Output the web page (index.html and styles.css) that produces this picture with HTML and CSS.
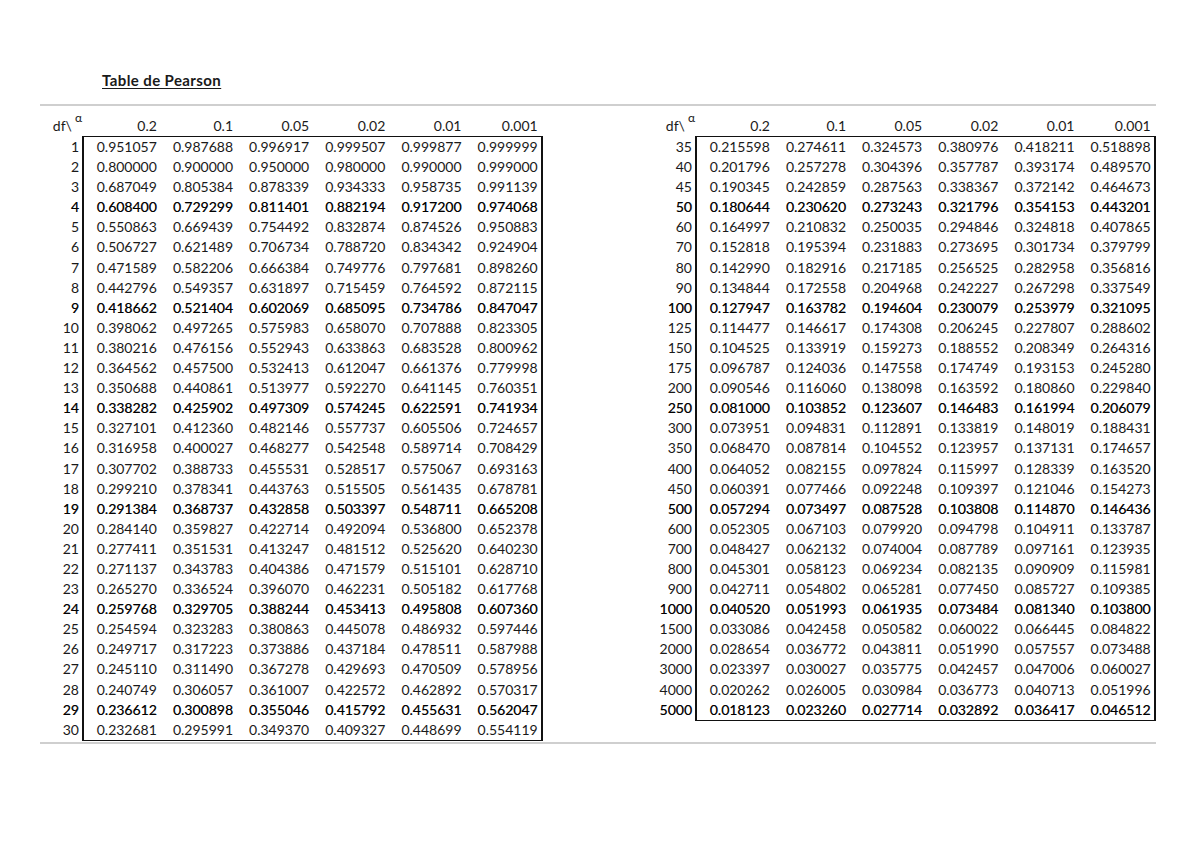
FILE: index.html
```html
<!DOCTYPE html>
<html lang="fr">
<head>
<meta charset="utf-8">
<title>Table de Pearson</title>
<link rel="stylesheet" href="styles.css">
</head>
<body>
<div class="page">
  <h1 class="title">Table de Pearson</h1>
  <div class="sheet">
    <div class="tbl tbl-l">
      <div class="hdr">
        <span class="lab">df\<sup class="alpha">α</sup></span>
        <span class="h">0.2</span><span class="h">0.1</span><span class="h">0.05</span><span class="h">0.02</span><span class="h">0.01</span><span class="h">0.001</span>
      </div>
      <div class="body">
        <div class="labels">
          <div>1</div><div>2</div><div>3</div><div>4</div><div>5</div><div>6</div><div>7</div><div>8</div><div>9</div><div>10</div>
          <div>11</div><div>12</div><div>13</div><div>14</div><div>15</div><div>16</div><div>17</div><div>18</div><div>19</div><div>20</div>
          <div>21</div><div>22</div><div>23</div><div>24</div><div>25</div><div>26</div><div>27</div><div>28</div><div>29</div><div>30</div>
        </div>
        <div class="box">
          <div class="row"><span>0.951057</span><span>0.987688</span><span>0.996917</span><span>0.999507</span><span>0.999877</span><span>0.999999</span></div>
          <div class="row"><span>0.800000</span><span>0.900000</span><span>0.950000</span><span>0.980000</span><span>0.990000</span><span>0.999000</span></div>
          <div class="row"><span>0.687049</span><span>0.805384</span><span>0.878339</span><span>0.934333</span><span>0.958735</span><span>0.991139</span></div>
          <div class="row"><span>0.608400</span><span>0.729299</span><span>0.811401</span><span>0.882194</span><span>0.917200</span><span>0.974068</span></div>
          <div class="row"><span>0.550863</span><span>0.669439</span><span>0.754492</span><span>0.832874</span><span>0.874526</span><span>0.950883</span></div>
          <div class="row"><span>0.506727</span><span>0.621489</span><span>0.706734</span><span>0.788720</span><span>0.834342</span><span>0.924904</span></div>
          <div class="row"><span>0.471589</span><span>0.582206</span><span>0.666384</span><span>0.749776</span><span>0.797681</span><span>0.898260</span></div>
          <div class="row"><span>0.442796</span><span>0.549357</span><span>0.631897</span><span>0.715459</span><span>0.764592</span><span>0.872115</span></div>
          <div class="row"><span>0.418662</span><span>0.521404</span><span>0.602069</span><span>0.685095</span><span>0.734786</span><span>0.847047</span></div>
          <div class="row"><span>0.398062</span><span>0.497265</span><span>0.575983</span><span>0.658070</span><span>0.707888</span><span>0.823305</span></div>
          <div class="row"><span>0.380216</span><span>0.476156</span><span>0.552943</span><span>0.633863</span><span>0.683528</span><span>0.800962</span></div>
          <div class="row"><span>0.364562</span><span>0.457500</span><span>0.532413</span><span>0.612047</span><span>0.661376</span><span>0.779998</span></div>
          <div class="row"><span>0.350688</span><span>0.440861</span><span>0.513977</span><span>0.592270</span><span>0.641145</span><span>0.760351</span></div>
          <div class="row"><span>0.338282</span><span>0.425902</span><span>0.497309</span><span>0.574245</span><span>0.622591</span><span>0.741934</span></div>
          <div class="row"><span>0.327101</span><span>0.412360</span><span>0.482146</span><span>0.557737</span><span>0.605506</span><span>0.724657</span></div>
          <div class="row"><span>0.316958</span><span>0.400027</span><span>0.468277</span><span>0.542548</span><span>0.589714</span><span>0.708429</span></div>
          <div class="row"><span>0.307702</span><span>0.388733</span><span>0.455531</span><span>0.528517</span><span>0.575067</span><span>0.693163</span></div>
          <div class="row"><span>0.299210</span><span>0.378341</span><span>0.443763</span><span>0.515505</span><span>0.561435</span><span>0.678781</span></div>
          <div class="row"><span>0.291384</span><span>0.368737</span><span>0.432858</span><span>0.503397</span><span>0.548711</span><span>0.665208</span></div>
          <div class="row"><span>0.284140</span><span>0.359827</span><span>0.422714</span><span>0.492094</span><span>0.536800</span><span>0.652378</span></div>
          <div class="row"><span>0.277411</span><span>0.351531</span><span>0.413247</span><span>0.481512</span><span>0.525620</span><span>0.640230</span></div>
          <div class="row"><span>0.271137</span><span>0.343783</span><span>0.404386</span><span>0.471579</span><span>0.515101</span><span>0.628710</span></div>
          <div class="row"><span>0.265270</span><span>0.336524</span><span>0.396070</span><span>0.462231</span><span>0.505182</span><span>0.617768</span></div>
          <div class="row"><span>0.259768</span><span>0.329705</span><span>0.388244</span><span>0.453413</span><span>0.495808</span><span>0.607360</span></div>
          <div class="row"><span>0.254594</span><span>0.323283</span><span>0.380863</span><span>0.445078</span><span>0.486932</span><span>0.597446</span></div>
          <div class="row"><span>0.249717</span><span>0.317223</span><span>0.373886</span><span>0.437184</span><span>0.478511</span><span>0.587988</span></div>
          <div class="row"><span>0.245110</span><span>0.311490</span><span>0.367278</span><span>0.429693</span><span>0.470509</span><span>0.578956</span></div>
          <div class="row"><span>0.240749</span><span>0.306057</span><span>0.361007</span><span>0.422572</span><span>0.462892</span><span>0.570317</span></div>
          <div class="row"><span>0.236612</span><span>0.300898</span><span>0.355046</span><span>0.415792</span><span>0.455631</span><span>0.562047</span></div>
          <div class="row"><span>0.232681</span><span>0.295991</span><span>0.349370</span><span>0.409327</span><span>0.448699</span><span>0.554119</span></div>
        </div>
      </div>
    </div>

    <div class="tbl tbl-r">
      <div class="hdr">
        <span class="lab">df\<sup class="alpha">α</sup></span>
        <span class="h">0.2</span><span class="h">0.1</span><span class="h">0.05</span><span class="h">0.02</span><span class="h">0.01</span><span class="h">0.001</span>
      </div>
      <div class="body">
        <div class="labels">
          <div>35</div><div>40</div><div>45</div><div>50</div><div>60</div><div>70</div><div>80</div><div>90</div><div>100</div><div>125</div>
          <div>150</div><div>175</div><div>200</div><div>250</div><div>300</div><div>350</div><div>400</div><div>450</div><div>500</div><div>600</div>
          <div>700</div><div>800</div><div>900</div><div>1000</div><div>1500</div><div>2000</div><div>3000</div><div>4000</div><div>5000</div>
        </div>
        <div class="box">
          <div class="row"><span>0.215598</span><span>0.274611</span><span>0.324573</span><span>0.380976</span><span>0.418211</span><span>0.518898</span></div>
          <div class="row"><span>0.201796</span><span>0.257278</span><span>0.304396</span><span>0.357787</span><span>0.393174</span><span>0.489570</span></div>
          <div class="row"><span>0.190345</span><span>0.242859</span><span>0.287563</span><span>0.338367</span><span>0.372142</span><span>0.464673</span></div>
          <div class="row"><span>0.180644</span><span>0.230620</span><span>0.273243</span><span>0.321796</span><span>0.354153</span><span>0.443201</span></div>
          <div class="row"><span>0.164997</span><span>0.210832</span><span>0.250035</span><span>0.294846</span><span>0.324818</span><span>0.407865</span></div>
          <div class="row"><span>0.152818</span><span>0.195394</span><span>0.231883</span><span>0.273695</span><span>0.301734</span><span>0.379799</span></div>
          <div class="row"><span>0.142990</span><span>0.182916</span><span>0.217185</span><span>0.256525</span><span>0.282958</span><span>0.356816</span></div>
          <div class="row"><span>0.134844</span><span>0.172558</span><span>0.204968</span><span>0.242227</span><span>0.267298</span><span>0.337549</span></div>
          <div class="row"><span>0.127947</span><span>0.163782</span><span>0.194604</span><span>0.230079</span><span>0.253979</span><span>0.321095</span></div>
          <div class="row"><span>0.114477</span><span>0.146617</span><span>0.174308</span><span>0.206245</span><span>0.227807</span><span>0.288602</span></div>
          <div class="row"><span>0.104525</span><span>0.133919</span><span>0.159273</span><span>0.188552</span><span>0.208349</span><span>0.264316</span></div>
          <div class="row"><span>0.096787</span><span>0.124036</span><span>0.147558</span><span>0.174749</span><span>0.193153</span><span>0.245280</span></div>
          <div class="row"><span>0.090546</span><span>0.116060</span><span>0.138098</span><span>0.163592</span><span>0.180860</span><span>0.229840</span></div>
          <div class="row"><span>0.081000</span><span>0.103852</span><span>0.123607</span><span>0.146483</span><span>0.161994</span><span>0.206079</span></div>
          <div class="row"><span>0.073951</span><span>0.094831</span><span>0.112891</span><span>0.133819</span><span>0.148019</span><span>0.188431</span></div>
          <div class="row"><span>0.068470</span><span>0.087814</span><span>0.104552</span><span>0.123957</span><span>0.137131</span><span>0.174657</span></div>
          <div class="row"><span>0.064052</span><span>0.082155</span><span>0.097824</span><span>0.115997</span><span>0.128339</span><span>0.163520</span></div>
          <div class="row"><span>0.060391</span><span>0.077466</span><span>0.092248</span><span>0.109397</span><span>0.121046</span><span>0.154273</span></div>
          <div class="row"><span>0.057294</span><span>0.073497</span><span>0.087528</span><span>0.103808</span><span>0.114870</span><span>0.146436</span></div>
          <div class="row"><span>0.052305</span><span>0.067103</span><span>0.079920</span><span>0.094798</span><span>0.104911</span><span>0.133787</span></div>
          <div class="row"><span>0.048427</span><span>0.062132</span><span>0.074004</span><span>0.087789</span><span>0.097161</span><span>0.123935</span></div>
          <div class="row"><span>0.045301</span><span>0.058123</span><span>0.069234</span><span>0.082135</span><span>0.090909</span><span>0.115981</span></div>
          <div class="row"><span>0.042711</span><span>0.054802</span><span>0.065281</span><span>0.077450</span><span>0.085727</span><span>0.109385</span></div>
          <div class="row"><span>0.040520</span><span>0.051993</span><span>0.061935</span><span>0.073484</span><span>0.081340</span><span>0.103800</span></div>
          <div class="row"><span>0.033086</span><span>0.042458</span><span>0.050582</span><span>0.060022</span><span>0.066445</span><span>0.084822</span></div>
          <div class="row"><span>0.028654</span><span>0.036772</span><span>0.043811</span><span>0.051990</span><span>0.057557</span><span>0.073488</span></div>
          <div class="row"><span>0.023397</span><span>0.030027</span><span>0.035775</span><span>0.042457</span><span>0.047006</span><span>0.060027</span></div>
          <div class="row"><span>0.020262</span><span>0.026005</span><span>0.030984</span><span>0.036773</span><span>0.040713</span><span>0.051996</span></div>
          <div class="row"><span>0.018123</span><span>0.023260</span><span>0.027714</span><span>0.032892</span><span>0.036417</span><span>0.046512</span></div>
        </div>
      </div>
    </div>
  </div>
</div>
</body>
</html>
```

FILE: styles.css
```css
html, body {
  margin: 0;
  background: #ffffff;
}

body {
  font-family: Lato, "Open Sans", "Liberation Sans", sans-serif;
  color: #1a1a1a;
}

.page {
  padding: 71px 44px 0 40px;
}

.title {
  margin: 0 0 15px 62px;
  font-size: 15px;
  line-height: 18px;
  font-weight: 700;
  letter-spacing: 0.4px;
  text-decoration: underline;
  text-decoration-thickness: 1px;
  text-underline-offset: 2px;
}

.sheet {
  width: 1116px;
  display: flex;
  justify-content: space-between;
  align-items: flex-start;
  border-top: 2px solid #cfcfcf;
  border-bottom: 2px solid #cfcfcf;
  padding-bottom: 1px;
}

.tbl {
  display: flex;
  flex-direction: column;
  font-size: 14px;
}

.hdr {
  display: flex;
  align-items: flex-end;
  height: 30px;
  line-height: 20px;
}

.hdr .lab {
  width: 44px;
  box-sizing: border-box;
  padding-right: 2px;
  text-align: right;
  white-space: nowrap;
}

.tbl-r .hdr .lab {
  width: 47px;
}

.alpha {
  font-size: 12px;
  line-height: 0;
  vertical-align: 9px;
  margin-left: 3px;
}

.hdr .h {
  width: 76.17px;
  box-sizing: border-box;
  padding-right: 3.3px;
  text-align: right;
}

.body {
  display: flex;
  align-items: flex-start;
}

.labels {
  width: 42px;
  padding-top: 1px;
}

.tbl-r .labels {
  width: 45px;
}

.labels div {
  height: 20.1px;
  line-height: 20.1px;
  box-sizing: border-box;
  padding-right: 3px;
  text-align: right;
}

.box {
  width: 461px;
  box-sizing: border-box;
  border: 1px solid #111111;
  border-left-width: 2px;
  border-right-width: 2px;
}

.row {
  display: grid;
  grid-template-columns: repeat(6, 1fr);
  height: 20.1px;
  line-height: 20.1px;
}

.row span {
  padding-right: 3.3px;
  text-align: right;
}

.row:nth-child(5n+4),
.labels div:nth-child(5n+4) {
  color: #000000;
  text-shadow: 0.3px 0 0 rgba(0, 0, 0, 0.55);
}
```
